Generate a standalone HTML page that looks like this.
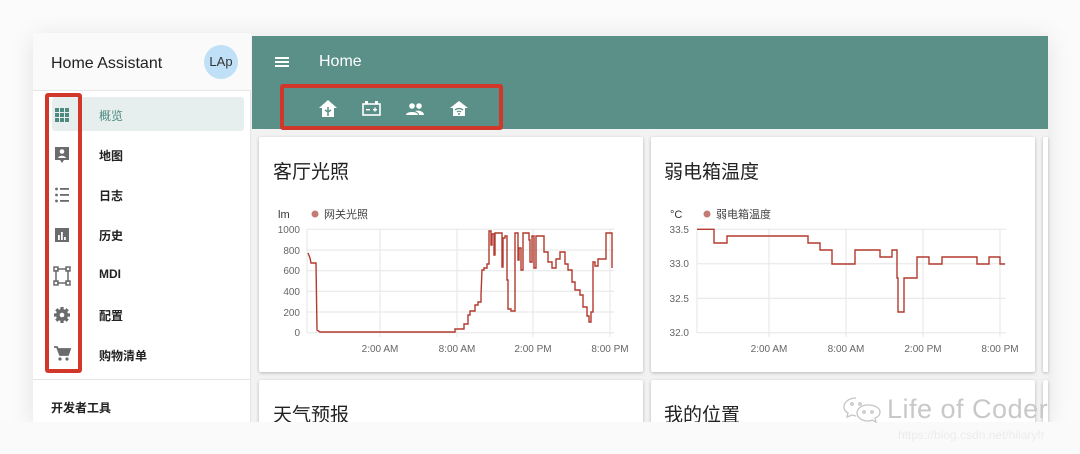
<!DOCTYPE html>
<html><head><meta charset="utf-8"><style>
*{margin:0;padding:0;box-sizing:border-box}
body{width:1080px;height:454px;background:#fbfbfb;position:relative;overflow:hidden;font-family:"Liberation Sans","Noto Sans CJK SC",sans-serif}
.abs{position:absolute}
.win{left:33px;top:33px;width:1015px;height:389px;background:#f2f2f2;overflow:hidden;box-shadow:0 4px 24px rgba(0,0,0,.10)}
.side{left:33px;top:33px;width:218px;height:389px;background:#fff;border-right:1px solid #e4e4e4}
.item{position:absolute;left:99px;font-size:12px;font-weight:bold;color:#222}
.card{background:#fff;box-shadow:0 1px 3px rgba(0,0,0,.25);border-radius:2px}
.ct{font-size:19px;color:#222;position:absolute}
svg text{font-family:"Liberation Sans","Noto Sans CJK SC",sans-serif}
</style></head><body>
<div class="abs win"></div>
<div class="abs side"></div>
<div class="abs" style="left:33px;top:33px;width:218px;height:58px;background:#fafafa;border-bottom:1px solid #e6e6e6"></div>
<div class="abs" style="left:51px;top:55px;font-size:16px;color:#222">Home Assistant</div>
<div class="abs" style="left:204px;top:45px;width:34px;height:34px;border-radius:50%;background:#bfe0f6;font-size:13px;color:#333;text-align:center;line-height:34px">LAp</div>
<div class="abs" style="left:52px;top:97px;width:192px;height:34px;background:#e7efee;border-radius:3px"></div>
<div class="item" style="top:107px;color:#4e8a80;font-weight:normal">概览</div>
<div class="item" style="top:147px">地图</div>
<div class="item" style="top:187px">日志</div>
<div class="item" style="top:227px">历史</div>
<div class="item" style="top:267px">MDI</div>
<div class="item" style="top:307px">配置</div>
<div class="item" style="top:347px">购物清单</div>
<div class="abs" style="left:33px;top:379px;width:218px;height:1px;background:#e4e4e4"></div>
<div class="abs" style="left:51px;top:399px;font-size:12px;font-weight:bold;color:#222">开发者工具</div>
<svg class="abs" style="left:50px;top:103px" width="24" height="270" viewBox="0 0 24 270">
<g fill="#4e8a80"><rect x="5" y="5" width="4" height="4"/><rect x="10" y="5" width="4" height="4"/><rect x="15" y="5" width="4" height="4"/><rect x="5" y="10" width="4" height="4"/><rect x="10" y="10" width="4" height="4"/><rect x="15" y="10" width="4" height="4"/><rect x="5" y="15" width="4" height="4"/><rect x="10" y="15" width="4" height="4"/><rect x="15" y="15" width="4" height="4"/></g>
<g fill="#6b6b6b">
<path d="M5 44h14v13h-5l-2 3-2-3H5z"/><circle cx="12" cy="48.5" r="2.3" fill="#fff"/><path d="M8 55c1-3 7-3 8 0z" fill="#fff"/>
<circle cx="6.5" cy="86" r="1.4"/><circle cx="6.5" cy="92" r="1.4"/><circle cx="6.5" cy="98" r="1.4"/><rect x="10" y="85" width="9" height="1.8"/><rect x="10" y="91" width="9" height="1.8"/><rect x="10" y="97" width="9" height="1.8"/>
<path d="M5 125h14v14H5z"/><rect x="8" y="132" width="1.8" height="5" fill="#fff"/><rect x="11" y="129" width="1.8" height="8" fill="#fff"/><rect x="14" y="134" width="1.8" height="3" fill="#fff"/>
<path d="M7 166h10M7 180h10M6 167v12M18 167v12" stroke="#6b6b6b" stroke-width="1.5" fill="none"/><g fill="none" stroke="#6b6b6b" stroke-width="1.5"><rect x="4" y="164" width="4" height="4"/><rect x="16" y="164" width="4" height="4"/><rect x="4" y="178" width="4" height="4"/><rect x="16" y="178" width="4" height="4"/></g>
<circle cx="12" cy="212" r="6"/><g stroke="#6b6b6b" stroke-width="3.2"><path d="M12 204v16M4 212h16M6.3 206.3l11.4 11.4M17.7 206.3l-11.4 11.4"/></g><circle cx="12" cy="212" r="2.3" fill="#fff"/>
<path d="M4 244h3l3 8h8l2-6H8" stroke="#6b6b6b" stroke-width="1.8" fill="none"/><path d="M8 246h12l-2 6h-8z"/><circle cx="10" cy="256" r="1.6"/><circle cx="17" cy="256" r="1.6"/>
</g></svg>
<div class="abs" style="left:45px;top:93px;width:37px;height:280px;border:4px solid #d2382a;border-radius:3px"></div>
<div class="abs" style="left:252px;top:36px;width:796px;height:93px;background:#5a9087"></div>
<div class="abs" style="left:275px;top:57px;width:14px;height:2px;background:#fff;box-shadow:0 4px 0 #fff,0 8px 0 #fff"></div>
<div class="abs" style="left:319px;top:53px;font-size:16px;color:#fff">Home</div>
<svg class="abs" style="left:318px;top:99px" width="160" height="20" viewBox="0 0 160 20" fill="#fff">
<path d="M10 1l9 8h-3v9H4V9H1z"/><path d="M10 8v9M7 11l3 2 3-2" stroke="#5a9087" stroke-width="1.5" fill="none"/>
<rect x="45" y="5" width="17" height="11" fill="none" stroke="#fff" stroke-width="1.6"/><rect x="47" y="2" width="3" height="3"/><rect x="57" y="2" width="3" height="3"/><rect x="48" y="10" width="4" height="1.4"/><rect x="55" y="10" width="4" height="1.4"/><rect x="56.3" y="8.5" width="1.4" height="4"/>
<circle cx="94" cy="7" r="2.8"/><circle cx="101" cy="7" r="2.8"/><path d="M88 16c0-4 12-4 12 0zM97 12c3-1 9 0 9 4h-5c0-2-2-3-4-4z"/>
<path d="M141 2l9 7h-3v8h-12V9h-3z"/><path d="M137 11a6 6 0 018 0M139 13a3 3 0 014 0" stroke="#5a9087" stroke-width="1.3" fill="none"/><circle cx="141" cy="15" r="1" fill="#5a9087"/>
</svg>
<div class="abs" style="left:280px;top:84px;width:223px;height:46px;border:4px solid #d2382a;border-radius:3px"></div>
<div class="abs card" style="left:259px;top:137px;width:384px;height:235px"></div>
<div class="abs card" style="left:651px;top:137px;width:384px;height:235px"></div>
<div class="abs card" style="left:1043px;top:137px;width:5px;height:235px;border-radius:2px 0 0 2px"></div>
<div class="abs card" style="left:1043px;top:380px;width:5px;height:60px"></div>
<div class="abs card" style="left:259px;top:380px;width:384px;height:60px"></div>
<div class="abs card" style="left:651px;top:380px;width:384px;height:60px"></div>
<div class="ct" style="left:273px;top:157px">客厅光照</div>
<div class="ct" style="left:664px;top:157px">弱电箱温度</div>
<div class="ct" style="left:273px;top:400px">天气预报</div>
<div class="ct" style="left:664px;top:400px">我的位置</div>
<svg class="abs" style="left:259px;top:200px" width="384" height="160">
<g stroke="#e6e6e6" stroke-width="1"><path d="M48 29.3H355M48 50H355M48 70.7H355M48 91.3H355M48 112H355M48 132.7H355"/><path d="M48 29V133M121 29V137M198 29V137M274 29V137M351 29V137"/></g>
<text x="19" y="18" font-size="11" fill="#333">lm</text><circle cx="56" cy="14" r="3.5" fill="#c27c74"/><text x="65" y="18" font-size="11" fill="#444">网关光照</text>
<g font-size="10" fill="#666" text-anchor="end"><text x="41" y="33">1000</text><text x="41" y="54">800</text><text x="41" y="74">600</text><text x="41" y="95">400</text><text x="41" y="116">200</text><text x="41" y="136">0</text></g>
<g font-size="10" fill="#666" text-anchor="middle"><text x="121" y="152">2:00 AM</text><text x="198" y="152">8:00 AM</text><text x="274" y="152">2:00 PM</text><text x="351" y="152">8:00 PM</text></g>
<polyline transform="translate(-259,-200)" fill="none" stroke="#b33a2e" stroke-width="1.4" points="308,253 310,258 311,263 316,263 317,330 320,332 328,332 455,332 455,329 464,329 464,324 468,324 468,315 470,315 470,311 475,311 475,305 478,305 478,302 481,302 481,295 482,270 484,270 484,268 487,268 487,264 489,264 489,231 491,231 491,245 492,245 492,234 494,234 494,255 495,255 495,233 502,233 502,267 503,267 503,238 505,238 505,236 507,236 507,280 508,280 508,309 511,309 511,311 515,311 515,233 518,233 518,260 519,260 519,248 521,248 521,270 523,270 523,233 529,233 529,240 530,240 530,262 532,262 532,236 534,236 534,268 536,268 536,236 544,236 544,252 548,252 548,262 552,262 552,268 556,268 556,259 560,259 560,252 565,252 565,264 568,264 568,270 572,270 572,282 575,282 575,290 580,290 580,295 583,295 583,307 587,307 587,316 589,316 589,322 591,322 591,312 593,312 593,262 595,262 595,266 598,266 598,259 606,259 606,233 612,233 612,268"/>
</svg>
<svg class="abs" style="left:651px;top:200px" width="384" height="160">
<g stroke="#e6e6e6" stroke-width="1"><path d="M46 29.3H355M46 63.8H355M46 98.2H355M46 132.7H355"/><path d="M46 29V133M118 29V137M195 29V137M272 29V137M349 29V137"/></g>
<text x="19" y="18" font-size="11" fill="#333">°C</text><circle cx="56" cy="14" r="3.5" fill="#c27c74"/><text x="65" y="18" font-size="11" fill="#444">弱电箱温度</text>
<g font-size="10" fill="#666" text-anchor="end"><text x="38" y="33">33.5</text><text x="38" y="67">33.0</text><text x="38" y="102">32.5</text><text x="38" y="136">32.0</text></g>
<g font-size="10" fill="#666" text-anchor="middle"><text x="118" y="152">2:00 AM</text><text x="195" y="152">8:00 AM</text><text x="272" y="152">2:00 PM</text><text x="349" y="152">8:00 PM</text></g>
<polyline transform="translate(-651,-200)" fill="none" stroke="#b33a2e" stroke-width="1.4" points="697,229.3 714,229.3 714,243 727,243 727,236 808,236 808,243 820,243 820,250 832,250 832,264 855,264 855,250 880,250 880,257 892,257 892,250 897,250 897,278 898,278 898,312 904,312 904,278 917,278 917,257 929,257 929,264 942,264 942,257 977,257 977,264 989,264 989,257 1000,257 1000,264 1005,264"/>
</svg>
<div class="abs" style="left:0;top:422px;width:1080px;height:32px;background:#fafafa"></div>
<svg class="abs" style="left:842px;top:395px" width="42" height="28" viewBox="0 0 42 28" fill="none" stroke="#c4c4c4" stroke-width="1.3">
<path d="M14 3C7 3 2 7 2 12c0 3 2 5 4 6l-1 4 5-2c1 0 3 1 4 1"/><path d="M26 10c-7 0-11 4-11 8s4 8 11 8c1 0 3 0 4-1l4 2-1-4c3-1 5-3 5-6 0-4-5-7-12-7z"/>
<circle cx="10" cy="9" r="1.2"/><circle cx="18" cy="9" r="1.2"/><circle cx="22" cy="17" r="1.2"/><circle cx="30" cy="17" r="1.2"/></svg>
<div class="abs" style="left:887px;top:394px;font-size:27px;color:#c8c8c8;letter-spacing:0.5px">Life of Coder</div>
<div class="abs" style="left:898px;top:428px;font-size:12px;color:#ececec">https://blog.csdn.net/hilaryfr</div>
</body></html>
